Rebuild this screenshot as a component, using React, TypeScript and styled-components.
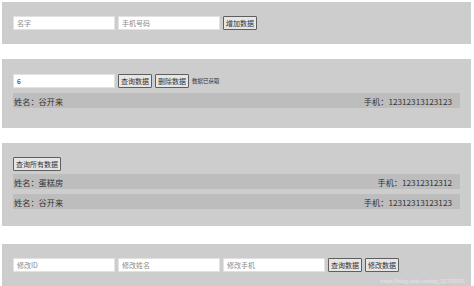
import styled, { createGlobalStyle } from "styled-components"

const Global = createGlobalStyle`
  body {
    margin: 0;
    padding: 2px 3px 0 2px;
    background: #ffffff;
    font-family: "Noto Sans CJK SC", "Noto Sans", sans-serif;
    overflow: hidden;
  }`

const Section = styled.section<{ $top: number; $bottom: number; $gap: number }>`
  position: relative;
  background: #cdcdcd;
  padding: ${p => p.$top}px 11px ${p => p.$bottom}px 11px;
  margin-bottom: ${p => p.$gap}px;`

const Controls = styled.div`
  display: flex;
  align-items: center;
  gap: 3px;
  height: 14px;`

const Input = styled.input`
  box-sizing: border-box;
  width: 102px;
  height: 14px;
  margin: 0;
  padding: 0 3px;
  border: 1px solid #e2e2e2;
  background: #ffffff;
  font-family: "Noto Sans CJK SC", sans-serif;
  font-size: 7px;
  color: #222;
  outline: none;
  &::placeholder {
    color: #8a8a8a;
  }`

const Button = styled.button`
  box-sizing: border-box;
  height: 14px;
  margin: 0;
  padding: 0 2px;
  border: 1px solid #5e5e5e;
  border-radius: 1px;
  background: #e6e6e6;
  font-family: "Noto Sans CJK SC", sans-serif;
  font-size: 7px;
  color: #333;
  line-height: 12px;`

const Status = styled.span`
  font-size: 5.5px;
  color: #333;`

const Row = styled.div<{ $mt: number }>`
  display: flex;
  justify-content: space-between;
  align-items: center;
  height: 15px;
  margin-top: ${p => p.$mt}px;
  padding: 0 8px 0 1px;
  background: #bdbdbd;
  font-size: 8.2px;
  color: #333;`

const Watermark = styled.span`
  position: absolute;
  right: 6px;
  bottom: 2px;
  font-family: "Liberation Sans", sans-serif;
  font-size: 5.5px;
  color: rgba(255, 255, 255, 0.55);`

export default function App() {
  return (
    <>
      <Global />
      <Section $top={14} $bottom={14} $gap={15}>
        <Controls>
          <Input placeholder="名字" />
          <Input placeholder="手机号码" />
          <Button>增加数据</Button>
        </Controls>
      </Section>
      <Section $top={15} $bottom={20} $gap={15}>
        <Controls>
          <Input defaultValue="6" />
          <Button>查询数据</Button>
          <Button>删除数据</Button>
          <Status>数据已获取</Status>
        </Controls>
        <Row $mt={5}>
          <span>姓名：谷开来</span>
          <span>手机：12312313123123</span>
        </Row>
      </Section>
      <Section $top={14} $bottom={17} $gap={18}>
        <Controls>
          <Button>查询所有数据</Button>
        </Controls>
        <Row $mt={3}>
          <span>姓名：蛋糕房</span>
          <span>手机：12312312312</span>
        </Row>
        <Row $mt={5}>
          <span>姓名：谷开来</span>
          <span>手机：12312313123123</span>
        </Row>
      </Section>
      <Section $top={14} $bottom={14} $gap={0}>
        <Controls>
          <Input placeholder="修改ID" />
          <Input placeholder="修改姓名" />
          <Input placeholder="修改手机" />
          <Button>查询数据</Button>
          <Button>修改数据</Button>
        </Controls>
        <Watermark>https://blog.csdn.net/qq_32700001</Watermark>
      </Section>
    </>
  )
}
